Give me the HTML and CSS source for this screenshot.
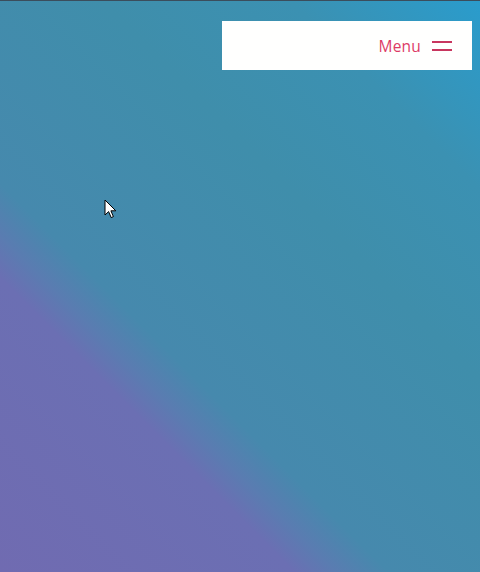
FILE: index.html
```html
<!DOCTYPE html>
<html lang="en">
<head>
<meta charset="utf-8">
<title>Menu</title>
<link rel="stylesheet" href="styles.css">
</head>
<body>
<div class="page">
  <header class="topbar">
    <button class="menu-btn" type="button">
      <span class="menu-label">Menu</span>
      <span class="burger"><span class="bar"></span><span class="bar"></span></span>
    </button>
  </header>
  <svg class="cursor" width="14" height="22" viewBox="0 0 14 22" aria-hidden="true">
    <path d="M1 1 L1 16 L4.6 12.6 L7.2 18.6 L9.4 17.6 L6.9 11.8 L11.8 11.8 Z" fill="#fff" stroke="#000" stroke-width="1" stroke-linejoin="miter"/>
  </svg>
</div>
</body>
</html>
```
FILE: styles.css
```css
* { box-sizing: border-box; }
html, body {
  margin: 0;
  padding: 0;
  width: 480px;
  height: 572px;
  overflow: hidden;
}
body {
  font-family: "Open Sans", "Liberation Sans", sans-serif;
}
.page {
  position: relative;
  width: 480px;
  height: 572px;
  border-top: 1px solid #3b4d5c;
  background: linear-gradient(45deg,
    #706bb1 0%,
    #6b6fb3 28%,
    #5a7cb1 32%,
    #4689ad 37%,
    #3f8eab 64%,
    #3b91b2 82%,
    #2a9ccc 100%);
  display: flex;
  flex-direction: column;
  align-items: flex-end;
  padding: 20px 8px 0 0;
}
.topbar {
  width: 250px;
  height: 49px;
  background: #fffffe;
  display: flex;
  justify-content: flex-end;
  align-items: center;
  padding-right: 20px;
}
.menu-btn {
  border: 0;
  background: transparent;
  padding: 0;
  display: flex;
  align-items: center;
  gap: 11px;
  cursor: pointer;
  font: inherit;
}
.menu-label {
  font-family: "Open Sans", "Liberation Sans", sans-serif;
  font-size: 15.5px;
  color: #dd3b67;
  line-height: 20px;
  letter-spacing: 0.2px;
}
.burger {
  display: flex;
  flex-direction: column;
  gap: 6px;
  width: 20px;
}
.bar {
  display: block;
  height: 2px;
  background: #c8365f;
}
.cursor {
  position: absolute;
  left: 104px;
  top: 198px;
}
```
